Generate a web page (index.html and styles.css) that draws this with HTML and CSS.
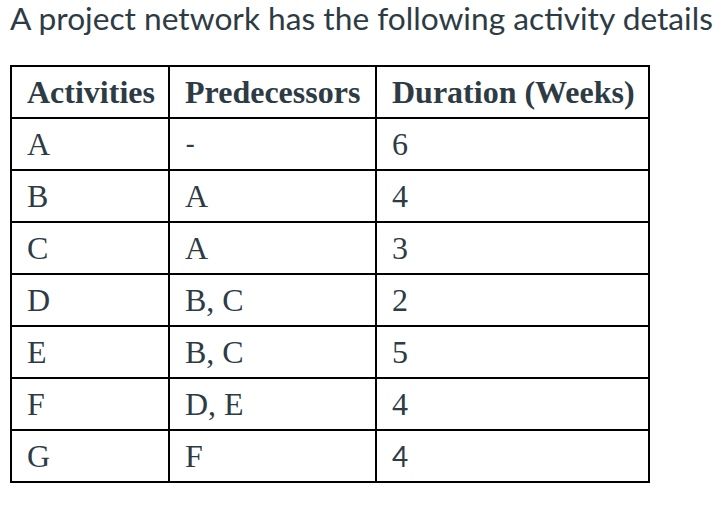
FILE: index.html
```html
<!DOCTYPE html>
<html>
<head>
<meta charset="utf-8">
<link rel="stylesheet" href="styles.css">
</head>
<body>
<div class="page">
  <p class="intro">A project network has the following activity details</p>
  <table class="activities">
    <thead>
      <tr>
        <th class="c1">Activities</th>
        <th class="c2">Predecessors</th>
        <th class="c3">Duration (Weeks)</th>
      </tr>
    </thead>
    <tbody>
      <tr><td>A</td><td><span class="sans">-</span></td><td>6</td></tr>
      <tr><td>B</td><td>A</td><td>4</td></tr>
      <tr><td>C</td><td>A</td><td>3</td></tr>
      <tr><td>D</td><td>B, C</td><td>2</td></tr>
      <tr><td>E</td><td>B, C</td><td>5</td></tr>
      <tr><td>F</td><td>D, E</td><td>4</td></tr>
      <tr><td>G</td><td>F</td><td><span class="sans">4</span></td></tr>
    </tbody>
  </table>
</div>
</body>
</html>
```

FILE: styles.css
```css
html, body {
  margin: 0;
  padding: 0;
  background: #ffffff;
}

.page {
  padding: 0 0 0 10px;
  color: #2d3b45;
}

.intro {
  margin: 0;
  font-family: Lato, "Liberation Sans", sans-serif;
  font-size: 31.7px;
  line-height: 36px;
  color: #2d3b45;
  white-space: nowrap;
}

.activities {
  margin-top: 29px;
  border-collapse: collapse;
  border: 2px solid #000;
  font-family: "Liberation Serif", "Times New Roman", serif;
  font-size: 32px;
  color: #2d3b45;
  table-layout: fixed;
  width: 638px;
}

.activities th,
.activities td {
  border: 2px solid #000;
  height: 52px;
  padding: 0 6px 0 15px;
  text-align: left;
  vertical-align: middle;
  box-sizing: border-box;
  white-space: nowrap;
}

.activities th {
  font-weight: bold;
}

.c1 { width: 158px; }
.c2 { width: 207px; }
.c3 { width: 273px; }

.sans {
  font-family: Lato, "Liberation Sans", sans-serif;
  font-size: 28px;
}
```
